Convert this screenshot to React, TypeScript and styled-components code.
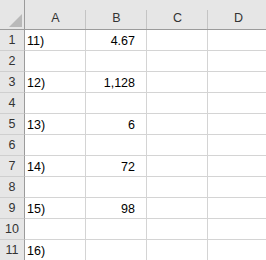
import React from 'react';
import styled, { createGlobalStyle } from 'styled-components';

const GlobalStyle = createGlobalStyle`
  html, body {
    margin: 0;
    padding: 0;
    background: #ffffff;
  }
  body {
    font-family: "Liberation Sans", Arial, sans-serif;
  }
`;

const columns = ['A', 'B', 'C', 'D'];

const rows: { a: string; b: string }[] = [
  { a: '11)', b: '4.67' },
  { a: '', b: '' },
  { a: '12)', b: '1,128' },
  { a: '', b: '' },
  { a: '13)', b: '6' },
  { a: '', b: '' },
  { a: '14)', b: '72' },
  { a: '', b: '' },
  { a: '15)', b: '98' },
  { a: '', b: '' },
  { a: '16)', b: '' },
];

const Sheet = styled.div`
  width: 266px;
  height: 260px;
  overflow: hidden;
  display: grid;
  grid-template-columns: 25px repeat(4, 61px);
  grid-auto-rows: 21px;
  grid-template-rows: 30px;
  font-size: 12.5px;
  color: #000;
`;

const Corner = styled.div`
  position: relative;
  box-sizing: border-box;
  background: #e6e6e6;
  border-right: 1px solid #9b9b9b;
  border-bottom: 1px solid #9b9b9b;

  &::after {
    content: '';
    position: absolute;
    right: 2px;
    bottom: 2px;
    width: 0;
    height: 0;
    border-left: 13px solid transparent;
    border-bottom: 13px solid #b9b9b9;
  }
`;

const ColHeader = styled.div`
  position: relative;
  box-sizing: border-box;
  background: #e6e6e6;
  border-bottom: 1px solid #9b9b9b;
  display: flex;
  align-items: flex-end;
  justify-content: center;
  padding-bottom: 4px;
  color: #333;
  font-size: 12.5px;

  &::after {
    content: '';
    position: absolute;
    right: 0;
    top: 10px;
    bottom: 0;
    width: 1px;
    background: #c4c4c4;
  }
`;

const RowHeader = styled.div`
  box-sizing: border-box;
  background: #e6e6e6;
  border-right: 1px solid #9b9b9b;
  border-bottom: 1px solid #cfcfcf;
  display: flex;
  align-items: center;
  justify-content: center;
  color: #333;
  font-size: 12.5px;
`;

const Cell = styled.div<{ $align?: 'left' | 'right' }>`
  box-sizing: border-box;
  border-right: 1px solid #d4d4d4;
  border-bottom: 1px solid #d4d4d4;
  display: flex;
  align-items: center;
  justify-content: ${p => (p.$align === 'right' ? 'flex-end' : 'flex-start')};
  padding: 1px ${p => (p.$align === 'right' ? '11px' : '0')} 0 ${p => (p.$align === 'right' ? '0' : '2px')};
  white-space: nowrap;
  overflow: hidden;
`;

const App: React.FC = () => {
  return (
    <>
      <GlobalStyle />
      <Sheet>
        <Corner />
        {columns.map(c => (
          <ColHeader key={c}>{c}</ColHeader>
        ))}
        {rows.map((r, i) => (
          <React.Fragment key={i}>
            <RowHeader>{i + 1}</RowHeader>
            <Cell>{r.a}</Cell>
            <Cell $align="right">{r.b}</Cell>
            <Cell />
            <Cell />
          </React.Fragment>
        ))}
      </Sheet>
    </>
  );
};

export default App;
